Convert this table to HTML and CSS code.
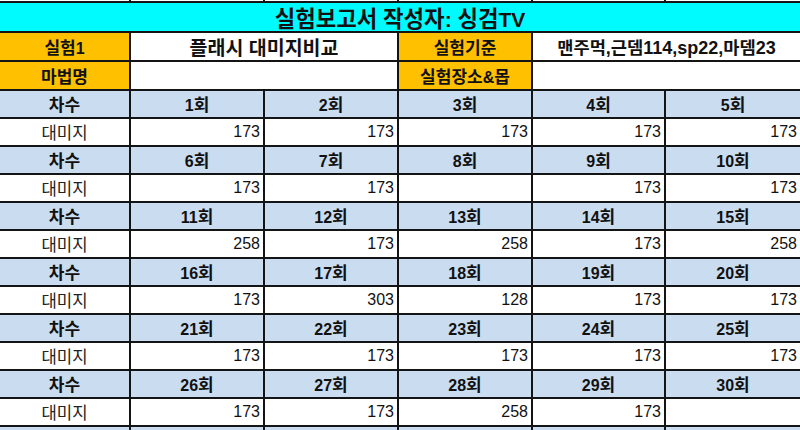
FILE: index.html
```html
<!DOCTYPE html>
<html lang="ko">
<head>
<meta charset="utf-8">
<title>실험보고서</title>
<link rel="stylesheet" href="styles.css">
</head>
<body>
<div class="sheet">
  <div class="c w"></div><div class="c w"></div><div class="c w"></div><div class="c w"></div><div class="c w"></div><div class="c w"></div>

  <div class="c title"><span class="k">실험보고서</span> <span class="k">작성자</span>: <span class="k">싱검</span>TV</div>

  <div class="c key"><span class="k">실험</span>1</div>
  <div class="c val big span2"><span class="k">플래시 대미지비교</span></div>
  <div class="c key"><span class="k">실험기준</span></div>
  <div class="c val crit span2"><span class="k">맨주먹</span>,<span class="k">근뎀</span>114,sp22,<span class="k">마뎀</span>23</div>

  <div class="c key"><span class="k">마법명</span></div>
  <div class="c val span2"></div>
  <div class="c key"><span class="k">실험장소</span>&amp;<span class="k">몹</span></div>
  <div class="c val span2"></div>

  <div class="c hd"><span class="k">차수</span></div><div class="c hd">1<span class="k">회</span></div><div class="c hd">2<span class="k">회</span></div><div class="c hd">3<span class="k">회</span></div><div class="c hd">4<span class="k">회</span></div><div class="c hd">5<span class="k">회</span></div>
  <div class="c lbl"><span class="k">대미지</span></div><div class="c num">173</div><div class="c num">173</div><div class="c num">173</div><div class="c num">173</div><div class="c num">173</div>

  <div class="c hd"><span class="k">차수</span></div><div class="c hd">6<span class="k">회</span></div><div class="c hd">7<span class="k">회</span></div><div class="c hd">8<span class="k">회</span></div><div class="c hd">9<span class="k">회</span></div><div class="c hd">10<span class="k">회</span></div>
  <div class="c lbl"><span class="k">대미지</span></div><div class="c num">173</div><div class="c num">173</div><div class="c num"></div><div class="c num">173</div><div class="c num">173</div>

  <div class="c hd"><span class="k">차수</span></div><div class="c hd">11<span class="k">회</span></div><div class="c hd">12<span class="k">회</span></div><div class="c hd">13<span class="k">회</span></div><div class="c hd">14<span class="k">회</span></div><div class="c hd">15<span class="k">회</span></div>
  <div class="c lbl"><span class="k">대미지</span></div><div class="c num">258</div><div class="c num">173</div><div class="c num">258</div><div class="c num">173</div><div class="c num">258</div>

  <div class="c hd"><span class="k">차수</span></div><div class="c hd">16<span class="k">회</span></div><div class="c hd">17<span class="k">회</span></div><div class="c hd">18<span class="k">회</span></div><div class="c hd">19<span class="k">회</span></div><div class="c hd">20<span class="k">회</span></div>
  <div class="c lbl"><span class="k">대미지</span></div><div class="c num">173</div><div class="c num">303</div><div class="c num">128</div><div class="c num">173</div><div class="c num">173</div>

  <div class="c hd"><span class="k">차수</span></div><div class="c hd">21<span class="k">회</span></div><div class="c hd">22<span class="k">회</span></div><div class="c hd">23<span class="k">회</span></div><div class="c hd">24<span class="k">회</span></div><div class="c hd">25<span class="k">회</span></div>
  <div class="c lbl"><span class="k">대미지</span></div><div class="c num">173</div><div class="c num">173</div><div class="c num">173</div><div class="c num">173</div><div class="c num">173</div>

  <div class="c hd"><span class="k">차수</span></div><div class="c hd">26<span class="k">회</span></div><div class="c hd">27<span class="k">회</span></div><div class="c hd">28<span class="k">회</span></div><div class="c hd">29<span class="k">회</span></div><div class="c hd">30<span class="k">회</span></div>
  <div class="c lbl"><span class="k">대미지</span></div><div class="c num">173</div><div class="c num">173</div><div class="c num">258</div><div class="c num">173</div><div class="c num"></div>

  <div class="c hd"></div><div class="c hd"></div><div class="c hd"></div><div class="c hd"></div><div class="c hd"></div><div class="c hd"></div>
</div>
</body>
</html>
```
FILE: styles.css
```css
html, body {
  margin: 0;
  padding: 0;
  background: #ffffff;
}
body {
  width: 800px;
  height: 430px;
  overflow: hidden;
  font-family: "Liberation Sans", "Noto Sans CJK KR", Arial, sans-serif;
  color: #111111;
}
.sheet {
  display: grid;
  grid-template-columns: 129px 132px 132px 132px 131px 134px;
  grid-template-rows: 1px 28px 27px 27px repeat(12, 26px) 1fr;
  gap: 2px;
  background: #141414;
  width: 800px;
  height: 430px;
}
.c {
  display: block;
  text-align: center;
  font-size: 16px;
  line-height: 26px;
  white-space: nowrap;
}
.k {
  font-family: "Noto Sans CJK KR", sans-serif;
  font-size: 17px;
}
.w { background: #ffffff; }
.title {
  grid-column: 1 / -1;
  background: #00fbff;
  font-size: 21px;
  font-weight: 700;
  line-height: 29px;
}
.title .k { font-size: 22.3px; }
.key {
  background: #ffc000;
  font-weight: 700;
  line-height: 27px;
}
.val {
  background: #ffffff;
  font-weight: 700;
  line-height: 27px;
}
.big .k { font-size: 19.5px; }
.crit { font-size: 18px; }
.crit .k { font-size: 17.6px; }
.span2 { grid-column: span 2; }
.hd {
  background: #c9dcf0;
  font-weight: 700;
}
.lbl {
  background: #ffffff;
  color: #222222;
}
.lbl .k {
  font-size: 16.7px;
  font-weight: 400;
}
.num {
  background: #ffffff;
  text-align: right;
  padding-right: 3px;
}
```
